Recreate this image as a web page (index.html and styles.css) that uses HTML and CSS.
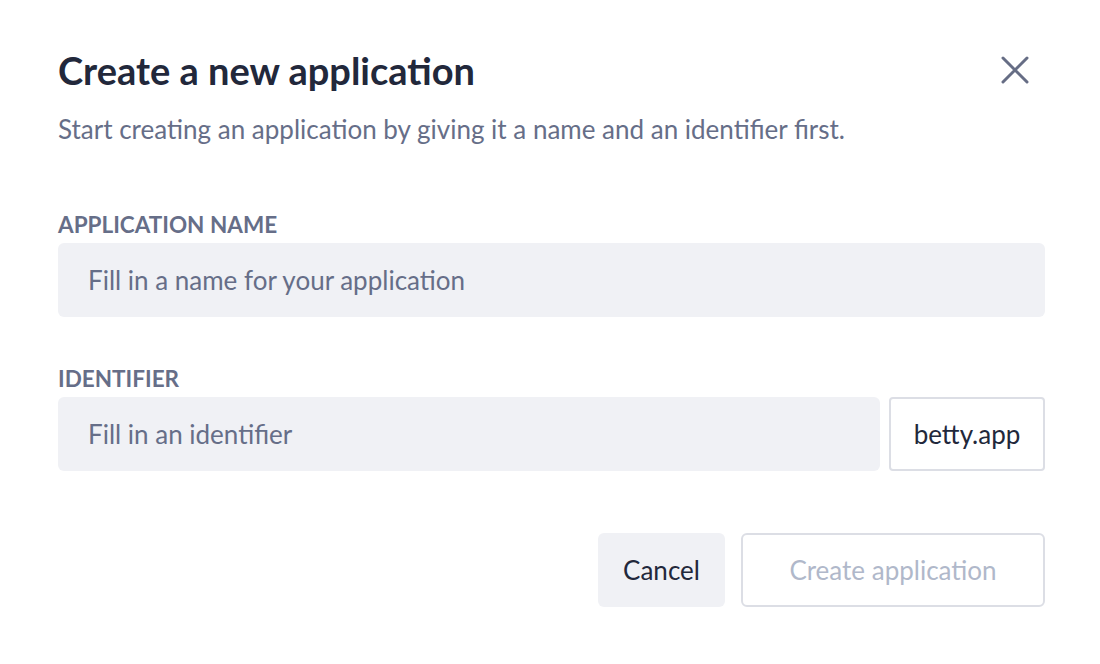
FILE: index.html
```html
<!DOCTYPE html>
<html lang="en">
<head>
<meta charset="utf-8">
<title>Create a new application</title>
<link rel="stylesheet" href="styles.css">
</head>
<body>
<div class="modal">
  <header class="head">
    <h1 class="title">Create a new application</h1>
    <button class="close" type="button" aria-label="Close">
      <svg width="30" height="30" viewBox="0 0 30 30"><path d="M3 3 L27 27 M27 3 L3 27" stroke="#666d85" stroke-width="3" stroke-linecap="round" fill="none"/></svg>
    </button>
  </header>
  <p class="sub">Start creating an application by giving it a name and an identifier first.</p>
  <div class="field">
    <label class="label" for="name">APPLICATION NAME</label>
    <input class="input" id="name" type="text" placeholder="Fill in a name for your application">
  </div>
  <div class="field">
    <label class="label" for="ident">IDENTIFIER</label>
    <div class="row">
      <input class="input grow" id="ident" type="text" placeholder="Fill in an identifier">
      <div class="suffix">betty.app</div>
    </div>
  </div>
  <div class="actions">
    <button class="btn cancel" type="button">Cancel</button>
    <button class="btn create" type="button" disabled>Create application</button>
  </div>
</div>
</body>
</html>
```
FILE: styles.css
```css
* { box-sizing: border-box; }
html, body { margin: 0; padding: 0; background: #ffffff; }
body { font-family: Lato, "Noto Sans", sans-serif; color: #22283b; }
.modal { padding: 46px 55px 0 58px; }
.head { display: flex; align-items: center; justify-content: space-between; }
.title { margin: 0; font-size: 38px; line-height: 48px; font-weight: 700; color: #22283b; }
.close { border: 0; background: none; padding: 0; margin-right: 15px; width: 30px; height: 30px; display: flex; cursor: pointer; }
.sub { margin: 18px 0 0; font-size: 26px; line-height: 34px; color: #666e88; }
.field { margin-top: 65px; }
.field + .field { margin-top: 48px; }
.label { display: block; font-size: 22.5px; line-height: 28px; font-weight: 700; color: #666e88; margin-bottom: 4px; }
.input { display: block; width: 100%; height: 74px; border: 0; border-radius: 6px; background: #f0f1f5; padding: 0 30px; font-family: inherit; font-size: 26px; color: #22283b; outline: none; }
.input::placeholder { color: #666e88; opacity: 1; }
.row { display: flex; gap: 9px; }
.grow { flex: 1; width: auto; }
.suffix { width: 156px; height: 74px; border: 2px solid #dcdee5; border-radius: 4px; display: flex; align-items: center; justify-content: center; font-size: 26px; color: #22283b; }
.actions { display: flex; justify-content: flex-end; gap: 16px; margin-top: 62px; }
.btn { height: 74px; border-radius: 6px; font-family: inherit; font-size: 26px; padding: 0 20px; }
.cancel { width: 127px; border: 0; background: #f0f1f5; color: #22283b; }
.create { width: 304px; background: #fff; border: 2px solid #dcdee5; color: #b0b8ca; }
```
